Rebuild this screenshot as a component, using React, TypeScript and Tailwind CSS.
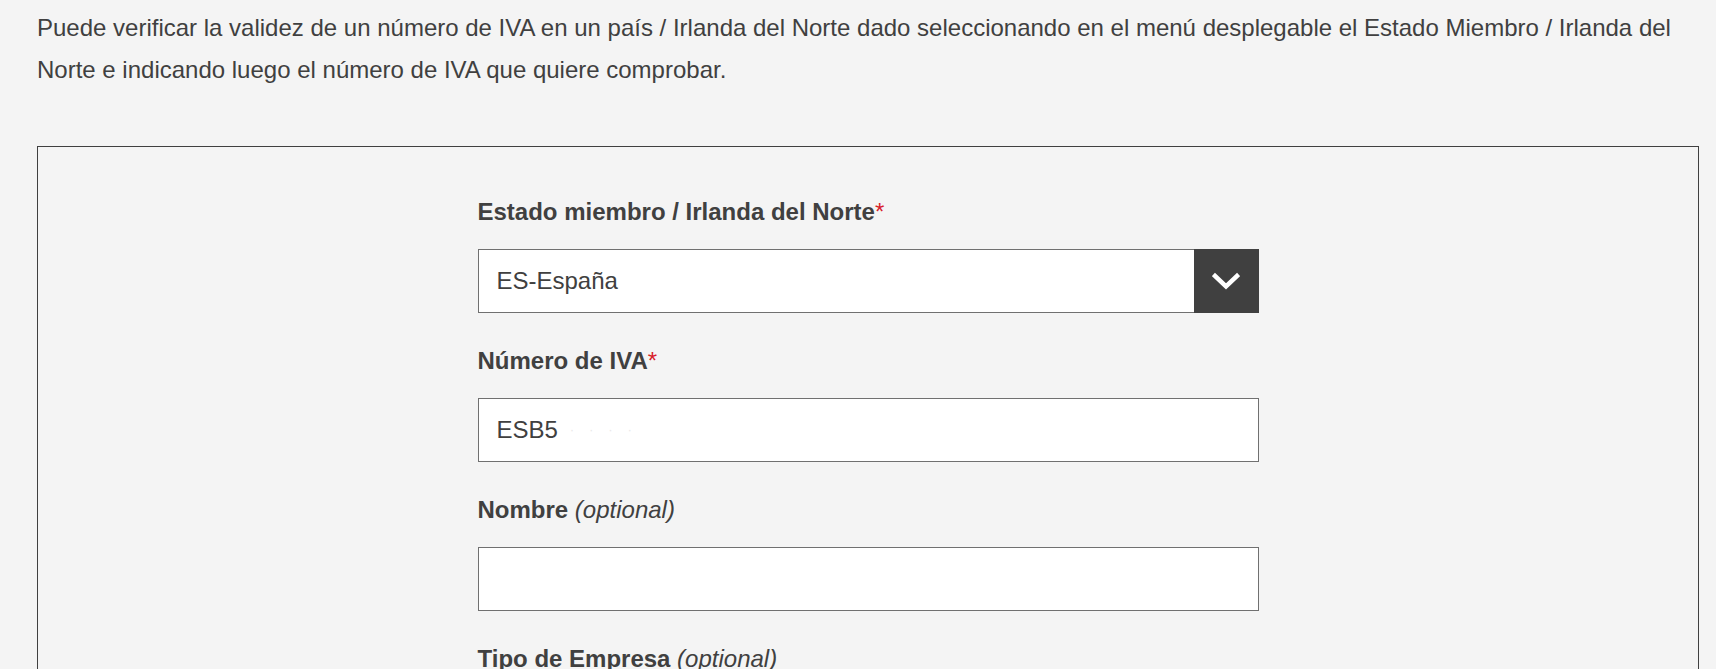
import { ReactNode } from "react";

function Label({ text, required, optional }: { text: string; required?: boolean; optional?: boolean }) {
  return (
    <label className="block text-[24px] leading-[26px] font-bold text-[#404040] mb-[24px]">
      {text}
      {required && <span className="text-[#d81e2c] font-normal">*</span>}
      {optional && <span className="font-normal italic"> (optional)</span>}
    </label>
  );
}

function Field({ children }: { children: ReactNode }) {
  return <div className="mb-[35px]">{children}</div>;
}

export default function App() {
  return (
    <div className="min-h-screen bg-[#f4f4f4] text-[#404040] font-['Liberation_Sans',Arial,sans-serif] pl-[37px] pr-[17px] pt-[7px] pb-10">
      <p className="text-[24px] leading-[42px] pr-[8px]">
        Puede verificar la validez de un número de IVA en un país / Irlanda del Norte dado seleccionando en el menú desplegable el Estado Miembro / Irlanda del Norte e indicando luego el número de IVA que quiere comprobar.
      </p>

      {/* Formulario */}
      <div className="mt-[55px] border border-[#404040] flex justify-center pt-[52px] pb-10">
        <form className="w-[781px]">
          <Field>
            <Label text="Estado miembro / Irlanda del Norte" required />
            <div className="flex h-[64px] border border-[#707070] bg-white">
              <div className="flex-1 flex items-center pl-[18px] text-[24px]">ES-España</div>
              <div className="w-[65px] -my-px -mr-px bg-[#404040] flex items-center justify-center">
                <svg width="28" height="20" viewBox="0 0 28 20" fill="none">
                  <path d="M3 5 L14 15.5 L25 5" stroke="white" strokeWidth="4.5" strokeLinecap="square" />
                </svg>
              </div>
            </div>
          </Field>

          <Field>
            <Label text="Número de IVA" required />
            <div className="flex items-center h-[64px] border border-[#707070] bg-white pl-[18px] text-[24px]">
              ESB5
              <span className="ml-3 text-[12px] text-[#e8e8e8] tracking-[6px]">· · · ·</span>
            </div>
          </Field>

          <Field>
            <Label text="Nombre" optional />
            <div className="h-[64px] border border-[#707070] bg-white" />
          </Field>

          <Field>
            <Label text="Tipo de Empresa" optional />
            <div className="h-[64px] border border-[#707070] bg-white" />
          </Field>
        </form>
      </div>
    </div>
  );
}
